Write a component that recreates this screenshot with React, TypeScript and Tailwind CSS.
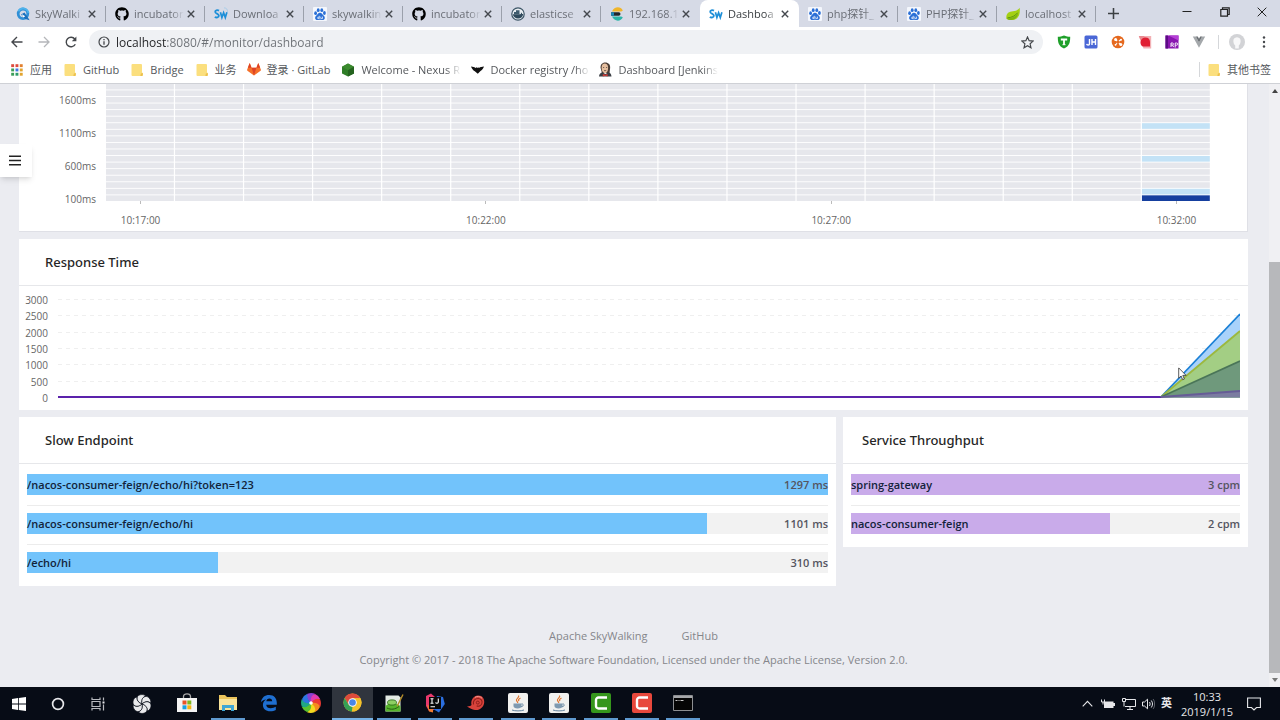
import type { ReactNode } from 'react';
import { FaGithub } from 'react-icons/fa';

/* ---------- favicons and small drawings ---------- */

const GithubMark = () => <FaGithub className="size-[14px] text-black" aria-hidden="true" />;

const QMark = () => (
  <svg viewBox="0 0 14 14" className="size-[14px]" aria-hidden="true">
    <circle cx="7" cy="6.8" r="4.8" fill="none" stroke="#2f8fd6" strokeWidth="2.8" />
    <path d="M2.400 4.200A5.400 5.400 0 0 1 12.400 6" fill="none" stroke="#4fb3ec" strokeWidth="1.800" />
    <path d="M5 7.500l3.500-2 5.200 7.800-4.500-1.300z" fill="#1b70bd" />
    <path d="M5.600 7l3.600 2.200-1.800 1.400z" fill="#fff" />
  </svg>
);

const SwMark = ({ arc = false }: { arc?: boolean }) => (
  <svg viewBox="0 0 14 14" className="size-[14px]" aria-hidden="true">
    <path
      d="M5 3.600C3.200 2.600 1 3.300 1.200 5c.2 1.700 3.800 1.700 3.700 3.800C4.800 10.600 2.400 11 .8 9.900"
      fill="none"
      stroke="#1d8fd8"
      strokeWidth="1.800"
    />
    <path d="M6.400 5.300l1.500 5.200 1.700-4.800 1.700 4.800 1.600-5.200" fill="none" stroke="#1d8fd8" strokeWidth="1.700" />
    {arc && <path d="M10 .8c2.500.2 3.800 1.800 3.500 4" fill="none" stroke="#a9cde8" strokeWidth="1" />}
  </svg>
);

const BaiduMark = () => (
  <svg viewBox="0 0 14 14" className="size-[14px]" aria-hidden="true">
    <rect width="14" height="14" rx="1" fill="#f4f7fd" />
    <g fill="#2a6fd6">
      <ellipse cx="2.600" cy="6.200" rx="1.400" ry="1.900" />
      <ellipse cx="5.200" cy="3.200" rx="1.400" ry="1.900" />
      <ellipse cx="8.800" cy="3.200" rx="1.400" ry="1.900" />
      <ellipse cx="11.400" cy="6" rx="1.400" ry="1.900" />
      <path d="M7 5.800c1.800 0 2.400 1.800 3.800 2.900 1.600 1.300 1.400 4.300-1.200 4.300-1 0-1.600-.3-2.600-.3s-1.600.3-2.600.3c-2.600 0-2.900-3-1.200-4.300C4.600 7.600 5.200 5.800 7 5.800z" />
    </g>
    <path d="M6.300 8.800v2.800H4.800v-1.400h1.300M7.800 9.600v2h1.700v-2" fill="none" stroke="#fff" strokeWidth=".7" />
  </svg>
);

const DockerHubMark = () => (
  <svg viewBox="0 0 14 14" className="size-[14px]" aria-hidden="true">
    <circle cx="7" cy="7" r="6.200" fill="#e9eef2" stroke="#3c5566" strokeWidth="1.200" />
    <path d="M1.800 7.200h7.400c.8 0 1-.7.7-1.700 1 .3 1.200 1 1.200 1.500h1.200c-.7 2.900-2.500 4.600-5.200 4.600S2.200 9.600 1.800 7.200z" fill="#2f4a5c" />
    <path d="M3 5h5.500v2.200H3zM5 3.200h3.500v1.800H5z" fill="#3f5c6e" />
  </svg>
);

const ElasticMark = () => (
  <svg viewBox="0 0 14 14" className="size-[14px]" aria-hidden="true">
    <path d="M2 4.400C3.400 1.700 5.300.3 7.800.3c2.200 0 3.900 1.200 5 3.200-.5.600-1.200.9-2 .9z" fill="#f0b52a" />
    <path d="M1.200 5.300h7.600a1.700 1.700 0 0 1 0 3.400H1.200a7 7 0 0 1 0-3.400z" fill="#20282d" />
    <path d="M1.200 5.300H4v3.400H1.200a7 7 0 0 1 0-3.400z" fill="#1a86b8" />
    <path d="M2 9.600h8.800c.8 0 1.500.3 2 .9-1.100 2-2.800 3.200-5 3.200-2.500 0-4.400-1.400-5.800-4.100z" fill="#2cb5a8" />
  </svg>
);

const SpringMark = () => (
  <svg viewBox="0 0 14 14" className="size-[14px]" aria-hidden="true">
    <path d="M13.600.8c.6 4.500.2 11.500-7 12.200-2.600.2-4.600-.3-6.200-1.200C-.2 6.500 2.600 4.500 7 4.200c3-.2 5.200-1.200 6.600-3.400z" fill="#a4d013" />
    <path d="M.6 11.500c4.500.2 9.400-1.500 11.600-6.300-.3 5-3.500 7.700-7 7.800-2 0-3.500-.5-4.600-1.500z" fill="#7fb512" />
    <path d="M1.500 10.800c4.200-.2 7.600-1.900 10-5" fill="none" stroke="#4f8a10" strokeWidth=".8" />
  </svg>
);

const Folder = () => (
  <svg viewBox="0 0 12 14" className="h-[14px] w-[12px]" aria-hidden="true">
    <path d="M1.500 1h8.500a1 1 0 0 1 1 1v7.500l.8.600V12a1 1 0 0 1-1 1h-9.300a1 1 0 0 1-1-1V2a1 1 0 0 1 1-1z" fill="#fbdf7e" />
    <path d="M9.300 13l.6-2.500 1.900-.6V12a1 1 0 0 1-1 1z" fill="#ecc04e" />
  </svg>
);

const appDots = ['#dd4b3e', '#dd4b3e', '#e2802f', '#3c9d58', '#3f76e4', '#e2a42f', '#3c9d58', '#2e9a6a', '#e2a42f'];

const AppsGrid = () => (
  <svg viewBox="0 0 12 12" className="size-[12px]" aria-hidden="true">
    {appDots.map((c, i) => (
      <rect key={i} x={(i % 3) * 4.3 + 0.2} y={Math.floor(i / 3) * 4.3 + 0.2} width="2.900" height="2.900" fill={c} />
    ))}
  </svg>
);

const GitlabMark = () => (
  <svg viewBox="0 0 14 13" className="h-[13px] w-[14px]" aria-hidden="true">
    <path d="M7 12.500L.4 7.700c-.3-.2-.4-.5-.3-.9L2.400.5c.1-.4.5-.4.6 0l1.600 4.300h4.800L11 .5c.1-.4.5-.4.6 0l2.300 6.300c.1.400 0 .7-.3.9z" fill="#f5702a" />
    <path d="M7 12.500L4.600 4.800h4.800z" fill="#dd4326" />
    <path d="M2.700.2L4.600 4.800H.9zM11.300.2l1.800 4.600H9.400z" fill="#dd4326" />
  </svg>
);

const NexusMark = () => (
  <svg viewBox="0 0 12 14" className="h-[14px] w-[12px]" aria-hidden="true">
    <path d="M6 .5l6 3.300v6.600l-6 3.200-6-3.200V3.800z" fill="#2f7d27" />
    <path d="M6 .5l6 3.300-6 3.400-6-3.400z" fill="#3b8a2e" />
    <path d="M6 7.200l6-3.400v6.600l-6 3.200z" fill="#25631f" />
  </svg>
);

const BatMark = () => (
  <svg viewBox="0 0 13 10" className="h-[10px] w-[13px]" aria-hidden="true">
    <path d="M0 1.500c2 .2 3.300.5 4.500 1.500l1-.8.8.7.800-.7.900.8c1.200-1 3-1.300 5-1.500-.8 2-2 3.800-3.500 4.500L6.800 8.700 3.800 6.300C2 5.300.8 3.700 0 1.500z" fill="#111" />
  </svg>
);

const JenkinsMark = () => (
  <svg viewBox="0 0 14 15" className="h-[15px] w-[14px]" aria-hidden="true">
    <path d="M2.600 6C2.200 2.600 4.200.4 7.200.4c3.400 0 5.200 2.200 4.900 5.600L11.500 11H4z" fill="#4a3c34" />
    <path d="M3.600 5.600C3.600 3 5 1.500 6.700 1.500c1.900 0 3.400 1.400 3.400 4s-.7 5.600-3.100 5.600-3.400-2.700-3.400-5.500z" fill="#e6bf9f" />
    <path d="M1 14.500c.2-2.500 1.500-3.500 3.300-4.200l3 1.700 3.400-1.700c1.800.7 2.600 2 2.800 4.200z" fill="#3b3f45" />
    <path d="M4.800 12l2.400.8 2.400-.8v2.500l-2.400-.8-2.400.8z" fill="#cf3a35" />
    <path d="M5 5.500h1.200M8 5.500h1.200M6 8.600h2.200" stroke="#5a4a40" strokeWidth=".8" />
  </svg>
);

const Cross = ({ className }: { className: string }) => (
  <svg viewBox="0 0 8 8" className={className} aria-hidden="true">
    <path d="M.8.8l6.400 6.400M7.200.8L.8 7.200" stroke="currentColor" strokeWidth="1.400" fill="none" />
  </svg>
);

/* ---------- browser chrome ---------- */

type Tab = { title: string; icon: ReactNode; active?: boolean };

const tabs: Tab[] = [
  { title: 'SkyWalki', icon: <QMark /> },
  { title: 'incubator', icon: <GithubMark /> },
  { title: 'Downloa', icon: <SwMark arc /> },
  { title: 'skywalkin', icon: <BaiduMark /> },
  { title: 'incubator', icon: <GithubMark /> },
  { title: 'elasticse', icon: <DockerHubMark /> },
  { title: '192.168.1', icon: <ElasticMark /> },
  { title: 'Dashboa', icon: <SwMark />, active: true },
  { title: 'php探针_', icon: <BaiduMark /> },
  { title: 'PHP探针_', icon: <BaiduMark /> },
  { title: 'localhost', icon: <SpringMark /> },
];

const TabStrip = () => (
  <header className="flex h-[27px] shrink-0 items-stretch bg-[#d6dae6] pl-[7px]">
    {tabs.map((t, i) => (
      <div
        key={i}
        className={
          t.active
            ? 'flex w-[99px] shrink-0 items-center rounded-t-lg bg-white pl-[9px] text-[#3c4043]'
            : 'flex w-[99px] shrink-0 items-center pl-[9px] text-[#6a6e76]'
        }
      >
        {t.icon}
        <button
          type="button"
          className="ml-[5px] w-[50px] text-left text-[11px] leading-4 whitespace-nowrap [mask-image:linear-gradient(to_right,black_75%,transparent)]"
        >
          {t.title}
        </button>
        <button type="button" aria-label={`Close ${t.title}`} className="ml-[3px] text-[#44484e]">
          <Cross className="size-[8px]" />
        </button>
        {i !== 6 && i !== 7 && <span className="ml-auto h-[16px] w-px bg-[#9ba0ab]" />}
      </div>
    ))}
    <button type="button" aria-label="New tab" className="ml-[12px] text-[#3c4043]">
      <svg viewBox="0 0 10 10" className="size-[11px]" aria-hidden="true">
        <path d="M5 0v10M0 5h10" stroke="currentColor" strokeWidth="1.400" />
      </svg>
    </button>
    <div className="ml-auto flex items-center pb-[3px] text-[#222]">
      <button type="button" aria-label="Minimize" className="flex w-[38px] justify-center">
        <svg viewBox="0 0 10 10" className="size-[10px]" aria-hidden="true">
          <path d="M.5 4.500h9" stroke="currentColor" />
        </svg>
      </button>
      <button type="button" aria-label="Restore" className="flex w-[38px] justify-center">
        <svg viewBox="0 0 10 10" className="size-[10px]" aria-hidden="true">
          <path d="M.8 2.500h6.700v6.700H.8zM2.500 2.500V.8h6.700v6.700H7.500" stroke="currentColor" strokeWidth="1.200" fill="none" />
        </svg>
      </button>
      <button type="button" aria-label="Close window" className="flex w-[36px] justify-center">
        <svg viewBox="0 0 10 10" className="size-[10px]" aria-hidden="true">
          <path d="M.7.7l8.600 8.600M9.300.7L.7 9.300" stroke="currentColor" />
        </svg>
      </button>
    </div>
  </header>
);

const extensions: { name: string; icon: ReactNode }[] = [
  {
    name: 'Tampermonkey',
    icon: (
      <svg viewBox="0 0 14 14" className="size-[14px]" aria-hidden="true">
        <path d="M7 .5c2 1 4 1.200 6.200 1.200 0 5.300-.6 9.300-6.200 11.800C1.400 11 .8 7 .8 1.700 3 1.700 5 1.500 7 .5z" fill="#1fa02a" />
        <path d="M3.800 4.500h6.400M7 4.500v5.200" stroke="#fff" strokeWidth="1.800" />
        <path d="M5.500 9.700h3" stroke="#fff" />
      </svg>
    ),
  },
  {
    name: 'JSON Handle',
    icon: (
      <svg viewBox="0 0 14 14" className="size-[14px]" aria-hidden="true">
        <rect x=".5" y=".5" width="13" height="13" rx="1.500" fill="#4a67d6" />
        <path d="M5.500 4v4.800c0 1.600-2.600 1.600-2.800 0M8 4v6M11.500 4v6M8 7h3.500" stroke="#fff" strokeWidth="1.400" fill="none" />
      </svg>
    ),
  },
  {
    name: 'Proxy',
    icon: (
      <svg viewBox="0 0 14 14" className="size-[14px]" aria-hidden="true">
        <circle cx="7" cy="7" r="6.300" fill="#e5691f" />
        <path d="M4.500 4.500l5 5M10 4.500l-3 2.500-2.500 3" stroke="#fff" strokeWidth="1.100" />
        <circle cx="4.600" cy="4.600" r="1.500" fill="#fff" />
        <circle cx="10" cy="4.700" r="1" fill="#fff" />
        <circle cx="9.800" cy="9.400" r="1.500" fill="#fff" />
        <circle cx="4.500" cy="9.800" r=".9" fill="#fff" />
        <circle cx="7" cy="7" r="1.600" fill="#e5691f" />
      </svg>
    ),
  },
  {
    name: 'Recorder',
    icon: (
      <svg viewBox="0 0 14 14" className="size-[14px]" aria-hidden="true">
        <path d="M.8 1h12.400v12.400H5.500z" fill="#f2b0b4" />
        <path d="M.8 1h6L2.500 5z" fill="#e88a90" />
        <path d="M2.500 7.500c0-3 2-5 5-5 3 0 4.500 2 4.500 4.500v4.500H5.500c-2 0-3-1.800-3-4z" fill="#e01f33" />
      </svg>
    ),
  },
  {
    name: 'Axure RP',
    icon: (
      <svg viewBox="0 0 14 14" className="size-[14px]" aria-hidden="true">
        <rect x=".5" y=".5" width="13" height="13" fill="#8a16b0" />
        <rect x=".5" y=".5" width="2.500" height="13" fill="#5d0c86" />
        <path d="M3.500.5h10v5z" fill="#b53fd6" />
        <path d="M6 12V8h1.500c1.300 0 1.300 2 0 2H6M7.500 10L8.600 12M10.200 12.500V8h1.400c1.500 0 1.500 2.200 0 2.200h-1.400" stroke="#fff" strokeWidth=".9" fill="none" />
      </svg>
    ),
  },
  {
    name: 'Vue devtools',
    icon: (
      <svg viewBox="0 0 14 14" className="size-[14px]" aria-hidden="true">
        <path d="M.8 1.500h3L7 7.400l3.200-5.900h3L7 12.700z" fill="#a4a8ab" />
        <path d="M3.800 1.500h2L7 3.800l1.200-2.300h2L7 7.400z" fill="#6c7175" />
      </svg>
    ),
  },
];

const Toolbar = () => (
  <div className="flex h-[30px] shrink-0 items-center bg-white pr-[10px] pl-[11px] text-[#44474b]">
    <button type="button" aria-label="Back">
      <svg viewBox="0 0 12 12" className="size-[12px]" aria-hidden="true">
        <path d="M11.500 6H1.200M6 1L1 6l5 5" fill="none" stroke="currentColor" strokeWidth="1.400" />
      </svg>
    </button>
    <button type="button" aria-label="Forward" className="ml-[15px] text-[#b5b7ba]">
      <svg viewBox="0 0 12 12" className="size-[12px]" aria-hidden="true">
        <path d="M.5 6h10.300M6 1l5 5-5 5" fill="none" stroke="currentColor" strokeWidth="1.300" />
      </svg>
    </button>
    <button type="button" aria-label="Reload" className="ml-[15px]">
      <svg viewBox="0 0 12 12" className="size-[12px]" aria-hidden="true">
        <path d="M10.300 8.200A4.800 4.800 0 1 1 9.800 3" fill="none" stroke="currentColor" strokeWidth="1.400" />
        <path d="M11.400.6v4.600H6.800z" fill="currentColor" />
      </svg>
    </button>
    <div className="ml-[12px] flex h-6 grow items-center rounded-full bg-[#eff1f4] px-[9px]">
      <svg viewBox="0 0 12 12" className="size-[12px] shrink-0" aria-hidden="true">
        <circle cx="6" cy="6" r="5" fill="none" stroke="currentColor" strokeWidth="1.200" />
        <path d="M6 5.300v3.400M6 3v1.300" stroke="currentColor" strokeWidth="1.300" />
      </svg>
      <input
        type="text"
        aria-label="Address"
        defaultValue="localhost:8080/#/monitor/dashboard"
        className="ml-[6px] h-5 min-w-0 grow bg-[linear-gradient(to_right,#202124_51px,#6d7176_51px)] bg-clip-text text-[12px] text-transparent outline-none"
      />
      <button type="button" aria-label="Bookmark this page">
        <svg viewBox="0 0 12 12" className="size-[13px]" aria-hidden="true">
          <path d="M6 .9l1.500 3.400 3.700.4-2.800 2.500.8 3.700L6 9l-3.200 1.900.8-3.700L.8 4.700l3.700-.4z" fill="none" stroke="currentColor" strokeWidth="1.100" />
        </svg>
      </button>
    </div>
    <div className="ml-[14px] flex items-center gap-[13px]">
      {extensions.map((e) => (
        <button key={e.name} type="button" aria-label={e.name}>
          {e.icon}
        </button>
      ))}
    </div>
    <span className="ml-[12px] h-[14px] w-px bg-[#d5d7da]" />
    <button type="button" aria-label="Profile" className="ml-[10px]">
      <svg viewBox="0 0 16 16" className="size-[16px]" aria-hidden="true">
        <circle cx="8" cy="8" r="8" fill="#d2d3d6" />
        <path d="M8 3.200a4 4 0 0 0-3.600 4.400c.1 1.900.9 3.200 1.800 3.800v3.200h3.600v-3.200c.9-.6 1.700-1.900 1.800-3.800A4 4 0 0 0 8 3.200z" fill="#f8f8f9" />
      </svg>
    </button>
    <button type="button" aria-label="Menu" className="ml-[13px]">
      <svg viewBox="0 0 12 12" className="size-[12px]" aria-hidden="true">
        <g fill="currentColor">
          <circle cx="6" cy="1.500" r="1.200" />
          <circle cx="6" cy="6" r="1.200" />
          <circle cx="6" cy="10.500" r="1.200" />
        </g>
      </svg>
    </button>
  </div>
);

const fade = 'w-[100px] [mask-image:linear-gradient(to_right,black_85%,transparent)]';

const BookmarksBar = () => (
  <nav
    aria-label="Bookmarks"
    className="flex h-[27px] shrink-0 items-center border-b border-[#cfd1d6] bg-white pr-[9px] pb-px pl-[11px] text-[11px] leading-4 whitespace-nowrap text-[#55585c]"
  >
    <a href="#apps" className="flex items-center gap-[7px]"><AppsGrid />应用</a>
    <a href="#github" className="ml-[12px] flex items-center gap-[7px]"><Folder />GitHub</a>
    <a href="#bridge" className="ml-[12px] flex items-center gap-[7px]"><Folder />Bridge</a>
    <a href="#work" className="ml-[12px] flex items-center gap-[7px]"><Folder />业务</a>
    <a href="#gitlab" className="ml-[10px] flex items-center gap-[6px]">
      <GitlabMark />
      登录 · GitLab
    </a>
    <a href="#nexus" className="ml-[12px] flex items-center gap-[7px]">
      <NexusMark />
      <span className={fade}>Welcome - Nexus R</span>
    </a>
    <a href="#registry" className="ml-[10px] flex items-center gap-[6px]">
      <BatMark />
      <span className={fade}>Docker registry /ho</span>
    </a>
    <a href="#jenkins" className="ml-[8px] flex items-center gap-[6px]">
      <JenkinsMark />
      <span className={fade}>Dashboard [Jenkins</span>
    </a>
    <span className="ml-auto h-[15px] w-px bg-[#d5d7da]" />
    <a href="#other" className="ml-[8px] flex items-center gap-[7px]"><Folder />其他书签</a>
  </nav>
);

/* ---------- dashboard ---------- */

const COLS = 16;
const ROWS = 18;
const ROW_PITCH = 6.56;
const MAP_HEIGHT = 117;
const highlights: Record<number, string> = { 0: '#153f9f', 1: '#c3e2f6', 6: '#c3e2f6', 11: '#c3e2f6' };
const timeLabels: Record<number, string> = { 0: '10:17:00', 5: '10:22:00', 10: '10:27:00', 15: '10:32:00' };

const Heatmap = () => (
  <section className="flex h-[148px] shrink-0 border-r border-b border-[#dfe0e6] bg-white pr-[36px] text-[10px] text-[#666]">
    <div className="w-[87px] shrink-0 pr-[10px] text-right">
      {['1600ms', '1100ms', '600ms', '100ms'].map((l) => (
        <div key={l} className="h-[33px] leading-8">
          {l}
        </div>
      ))}
    </div>
    <div className="min-w-0 grow">
      <svg viewBox={`0 0 1104 ${MAP_HEIGHT}`} preserveAspectRatio="none" className="block h-[117px] w-full" aria-hidden="true">
        {Array.from({ length: COLS * ROWS }, (_, n) => {
          const col = n % COLS;
          const row = Math.floor(n / COLS);
          const fill = (col === COLS - 1 && highlights[row]) || '#e6e7ec';
          return (
            <rect
              key={n}
              x={col * 69}
              y={MAP_HEIGHT - (row + 1) * ROW_PITCH + 0.9}
              width={67.8}
              height={ROW_PITCH - 0.9}
              fill={fill}
            />
          );
        })}
      </svg>
      <div className="grid grid-cols-16 text-center">
        {Array.from({ length: COLS }, (_, i) => (
          <div key={i}>
            {timeLabels[i] && (
              <>
                <span className="mx-auto block h-[3px] w-px bg-[#bbb]" />
                <span className="mt-[8px] block leading-4">{timeLabels[i]}</span>
              </>
            )}
          </div>
        ))}
      </div>
    </div>
  </section>
);

const CardTitle = ({ children, tight = false }: { children: ReactNode; tight?: boolean }) => (
  <h2
    className={
      tight
        ? "h-[47px] border-b border-[#e6e7ea] pl-[19px] font-['Noto_Sans',sans-serif] text-[13px] leading-[47px] font-medium text-[#262626]"
        : "h-[47px] border-b border-[#e6e7ea] pl-[26px] font-['Noto_Sans',sans-serif] text-[13px] leading-[47px] font-medium text-[#262626]"
    }
  >
    {children}
  </h2>
);

const series = [
  { top: 15, fill: '#a9d2fb', line: '#1b80d6' },
  { top: 32, fill: '#a3ce84', line: '#9cb83e' },
  { top: 62, fill: '#6f997c', line: '#4a7558' },
  { top: 92, fill: '#7b7ca0', line: '#665c96' },
];

const ResponseTime = () => (
  <section className="bg-white">
    <CardTitle>Response Time</CardTitle>
    <div className="flex pr-[8px] pb-[4px]">
      <div className="flex h-[120px] w-[39px] flex-col justify-between pt-[6px] pr-[10px] text-right text-[10px] leading-4 text-[#666]">
        {[3000, 2500, 2000, 1500, 1000, 500, 0].map((v) => (
          <span key={v}>{v}</span>
        ))}
      </div>
      <svg viewBox="0 0 1182 100" preserveAspectRatio="none" className="mt-[13px] block h-[100px] min-w-0 grow" aria-hidden="true">
        {[0, 1, 2, 3, 4, 5].map((i) => (
          <path key={i} d={`M0 ${Math.round(i * 16.3) + 0.5}H1182`} stroke="#efefef" strokeDasharray="4 4" />
        ))}
        <path d="M0 98H1103" stroke="#5b22ab" strokeWidth="2" />
        {series.map((s) => (
          <path key={s.top} d={`M1103 98.500L1182 ${s.top}V98.500z`} fill={s.fill} />
        ))}
        {series.map((s) => (
          <path key={s.top} d={`M1103 98L1182 ${s.top}`} stroke={s.line} strokeWidth="1.800" />
        ))}
      </svg>
    </div>
  </section>
);

type Row = { name: string; value: number };

type RankListProps = { title: string; rows: Row[]; unit: string; barClass: string; tight?: boolean };

const RankList = ({ title, rows, unit, barClass, tight }: RankListProps) => {
  const max = Math.max(...rows.map((r) => r.value));
  return (
    <section className="bg-white pb-[3px]">
      <CardTitle tight={tight}>{title}</CardTitle>
      <ul className="px-[8px] pt-[3px]">
        {rows.map((r) => (
          <li key={r.name} className="border-b border-[#ececec] pt-[7px] pb-[10px] last:border-b-0">
            <div className="grid h-[21px] items-center bg-[#f2f2f2] text-[11px] leading-[20px] font-semibold">
              <div className={barClass} style={{ width: `${(r.value / max) * 100}%` }} />
              <div className="col-start-1 row-start-1 flex justify-between">
                <span className="text-[#13233a]">{r.name}</span>
                <span className="text-[#55555f]">
                  {r.value} {unit}
                </span>
              </div>
            </div>
          </li>
        ))}
      </ul>
    </section>
  );
};

const Dashboard = () => (
  <main className="relative flex min-h-0 grow overflow-hidden bg-[#ebecf1]">
    <div className="min-w-0 grow pr-[21px] pl-[19px]">
      <div className="flex flex-col gap-[7px]">
        <Heatmap />
        <ResponseTime />
        <div className="grid grid-cols-3 items-start gap-[7px]">
          <div className="col-span-2">
            <RankList
              title="Slow Endpoint"
              unit="ms"
              barClass="col-start-1 row-start-1 h-full bg-[#72c3fb]"
              rows={[
                { name: '/nacos-consumer-feign/echo/hi?token=123', value: 1297 },
                { name: '/nacos-consumer-feign/echo/hi', value: 1101 },
                { name: '/echo/hi', value: 310 },
              ]}
            />
          </div>
          <RankList
            tight
            title="Service Throughput"
            unit="cpm"
            barClass="col-start-1 row-start-1 h-full bg-[#c9abea]"
            rows={[
              { name: 'spring-gateway', value: 3 },
              { name: 'nacos-consumer-feign', value: 2 },
            ]}
          />
        </div>
      </div>
      <footer className="mt-[38px] text-center text-[11px] leading-6 text-[#85868b]">
        <div className="flex justify-center gap-[34px]">
          <a href="#skywalking">Apache SkyWalking</a>
          <a href="#github">GitHub</a>
        </div>
        <p>Copyright © 2017 - 2018 The Apache Software Foundation, Licensed under the Apache License, Version 2.0.</p>
      </footer>
    </div>
    <div className="flex w-[11px] shrink-0 flex-col items-center bg-[#f0f0f3] py-[5px]" aria-hidden="true">
      <svg viewBox="0 0 6 4" className="h-[4px] w-[6px]"><path d="M0 4l3-4 3 4z" fill="#444" /></svg>
      <div className="mt-[169px] w-full grow bg-[#b7b8bb]" />
      <svg viewBox="0 0 6 4" className="mt-[5px] h-[4px] w-[6px]"><path d="M0 0h6L3 4z" fill="#777" /></svg>
    </div>
    <button
      type="button"
      aria-label="Toggle menu"
      className="absolute top-[60px] left-0 flex h-[33px] w-[32px] items-center bg-white pl-[9px] shadow-md"
    >
      <svg viewBox="0 0 12 11" className="h-[11px] w-[12px]" aria-hidden="true">
        <path d="M0 1.200h12M0 5.500h12M0 9.800h12" stroke="#222" strokeWidth="1.600" />
      </svg>
    </button>
    <svg viewBox="0 0 9 14" className="absolute top-[283px] left-[1178px] h-[14px] w-[9px]" aria-hidden="true">
      <path d="M.7.9v10.300l2.400-2.200 1.600 3.700 1.700-.7-1.600-3.600h3.300z" fill="#fff" stroke="#333" strokeWidth=".8" />
    </svg>
  </main>
);

/* ---------- taskbar ---------- */

const CamtasiaIcon = ({ color }: { color: string }) => (
  <svg viewBox="0 0 20 20" className="size-[20px]" aria-hidden="true">
    <rect width="20" height="20" rx="2" fill={color} />
    <path d="M16 4.500H7.500a2.500 2.500 0 0 0-2.500 2.500v6A2.500 2.500 0 0 0 7.500 15.500H16" fill="none" stroke="#fff" strokeWidth="2.400" />
  </svg>
);

const JavaIcon = () => (
  <svg viewBox="0 0 20 20" className="size-[20px]" aria-hidden="true">
    <rect width="20" height="20" rx="2" fill="#f1f1ef" />
    <path d="M10.500 2.500c1.500 2-3 3-2 5 .4.900 1.500 1.500 1.200 2.600M12.500 5c-2 1-2.500 2-1.500 3.200" fill="none" stroke="#e0762f" strokeWidth="1.200" />
    <path d="M5.500 10.500h8v2.500c0 1.500-1.500 2.500-4 2.500s-4-1-4-2.500z" fill="#7f9ab0" />
    <path d="M13.500 11c2.500-.5 2.200 2.700-.6 2.800M4 17c3 1.200 9 1.200 12 0" fill="none" stroke="#6585a0" />
  </svg>
);

const wheel = ['#8a3fd0', '#e03ab0', '#ec3a34', '#f58a1f', '#f4d91f', '#5cc22e', '#20a884', '#2c76e0'];

const taskApps: { name: string; running: boolean; active?: boolean; icon: ReactNode }[] = [
  {
    name: 'Store',
    running: false,
    icon: (
      <svg viewBox="0 0 20 20" className="size-[20px]" aria-hidden="true">
        <path d="M6.500 6V3.500a3.500 2.700 0 0 1 7 0V6" fill="none" stroke="#aaa" strokeWidth="1.300" />
        <path d="M0 5h20v14H0z" fill="#f4f4f4" />
        <path d="M5.500 7.500h4v4h-4z" fill="#ea5326" />
        <path d="M10.300 7.500h4v4h-4z" fill="#7fb71e" />
        <path d="M5.500 12.300h4v4h-4z" fill="#19a0e0" />
        <path d="M10.300 12.300h4v4h-4z" fill="#f7b512" />
      </svg>
    ),
  },
  {
    name: 'Explorer',
    running: true,
    icon: (
      <svg viewBox="0 0 20 18" className="h-[18px] w-[20px]" aria-hidden="true">
        <path d="M1 1h6l2 2h10v13H1z" fill="#eac45c" />
        <path d="M1 5h18v11H1z" fill="#f9e39a" />
        <path d="M4 17v-6h12v6h-3v-3H7v3z" fill="#3fa6d4" />
      </svg>
    ),
  },
  {
    name: 'Edge',
    running: false,
    icon: (
      <svg viewBox="0 0 18 18" className="size-[18px]" aria-hidden="true">
        <path d="M1 8.200C1.600 3.600 4.800 1 9.200 1c5 0 7.600 3.500 7.600 7.800v1.900H6.200c.1 2.400 2 3.500 4.600 3.500 1.900 0 3.600-.5 5-1.400v3.100c-1.400.8-3.300 1.300-5.500 1.300-4.600 0-7.400-2.500-7.400-6.300 0-2.300 1.200-4.200 3.200-5.300C4.200 5.800 2.300 6.600 1 8.200zm5.300-.9h5.900c0-1.900-1-2.900-2.800-2.900-1.700 0-2.900 1.100-3.100 2.900z" fill="#1f6fd0" />
      </svg>
    ),
  },
  {
    name: 'Browser',
    running: false,
    icon: (
      <svg viewBox="-10 -10 20 20" className="size-[20px]" aria-hidden="true">
        {wheel.map((c, i) => (
          <path key={c} d="M0 0C-3.500-2.500-5.500-6-3.500-9.200A10 10 0 0 1 4-9.200C1-7 0-4 0 0z" fill={c} transform={`rotate(${i * 45})`} />
        ))}
        <circle r="1.800" fill="#fff" />
      </svg>
    ),
  },
  {
    name: 'Chrome',
    running: true,
    active: true,
    icon: (
      <svg viewBox="0 0 20 20" className="size-[19px]" aria-hidden="true">
        <circle cx="10" cy="10" r="9.500" fill="#f4c22b" />
        <path d="M1.800 5.200A9.500 9.500 0 0 1 18.300 5.500H10L5.900 12.300z" fill="#de4b3c" />
        <path d="M1.800 5.200L5.900 12.300 10 14.500l-.7 5A9.500 9.500 0 0 1 1.800 5.200z" fill="#35a155" />
        <path d="M14 12.300L9.300 19.500A9.500 9.500 0 0 0 18.300 5.500H10z" fill="#f4c22b" />
        <circle cx="10" cy="10" r="4.500" fill="#fff" />
        <circle cx="10" cy="10" r="3.500" fill="#4a86e8" />
      </svg>
    ),
  },
  {
    name: 'Notepad++',
    running: true,
    icon: (
      <svg viewBox="0 0 20 20" className="size-[20px]" aria-hidden="true">
        <path d="M1.500 2.500h13l2 2v14h-15z" fill="#e4ebe6" />
        <path d="M1.500 13c4-4 9-4 15 0v5.500h-15z" fill="#58b52e" />
        <ellipse cx="8" cy="9.500" rx="4.500" ry="2.600" fill="#8ed063" stroke="#2e6d18" strokeWidth=".9" />
        <path d="M3 15c4 2 8 1.500 12-1.500" stroke="#285d14" fill="none" />
        <path d="M19 1.500l-5 10-.8 1.800" stroke="#b38c28" strokeWidth="1.400" fill="none" />
      </svg>
    ),
  },
  {
    name: 'IntelliJ IDEA',
    running: true,
    icon: (
      <svg viewBox="0 0 20 20" className="size-[20px]" aria-hidden="true">
        <path d="M1 3l5-2.500L10 4 9 17l-5 1-3-5z" fill="#e9386c" />
        <path d="M2 12l6 2v5.500l-4-1z" fill="#f07a30" />
        <path d="M12 3l6 1 1.800 7-5.800 8.500L8 16z" fill="#2b6fe0" />
        <path d="M4 4h12v12H4z" fill="#090909" />
        <path d="M5.500 5.800h3M7 5.800v4.500M5.500 10.300h3M13.300 5.500v3.500c0 1.500-2.200 1.700-2.800.5M5.500 13.800h4.500" stroke="#fff" strokeWidth="1.100" fill="none" />
      </svg>
    ),
  },
  {
    name: 'Shell client',
    running: true,
    icon: (
      <svg viewBox="0 0 20 18" className="h-[18px] w-[20px]" aria-hidden="true">
        <path d="M1 12.500c2.500-.2 3.500-.5 4.500-1.500C4.500 6.500 7 2 12 1.500c4.500-.2 6.500 3.500 6.200 7C17.800 13 14 16.500 9 16c-3-.3-5-1.800-8-3.500z" fill="#d8433c" />
        <path d="M7.500 10.500c-.8-3.500 1.500-6 4.500-6s4.500 2 4 4.500c-.4 2.500-3.300 4-5.300 2.800" fill="none" stroke="#8f1f1b" strokeWidth="1.100" />
        <circle cx="11.800" cy="8.600" r="1.500" fill="none" stroke="#8f1f1b" />
        <path d="M9 3.400c2-1.400 5-1.200 7 .8" stroke="#f29a90" fill="none" />
      </svg>
    ),
  },
  { name: 'Java 1', running: true, icon: <JavaIcon /> },
  { name: 'Java 2', running: true, icon: <JavaIcon /> },
  { name: 'Camtasia', running: true, icon: <CamtasiaIcon color="#35961c" /> },
  { name: 'Camtasia Recorder', running: true, icon: <CamtasiaIcon color="#e8483c" /> },
  {
    name: 'Command Prompt',
    running: true,
    icon: (
      <svg viewBox="0 0 20 16" className="h-[16px] w-[20px]" aria-hidden="true">
        <path d="M.5.500h19v15H.5z" fill="#050505" stroke="#8d8f92" />
        <path d="M1 1h18v2H1z" fill="#a5a7aa" />
        <path d="M2.500 5.500h2M5.500 5.500h1M7.500 5.500h3" stroke="#ccc" />
      </svg>
    ),
  },
];

const Taskbar = () => (
  <div className="flex h-[33px] shrink-0 items-stretch bg-[#070c16] text-[#e6e7ea]">
    <button type="button" aria-label="Start" className="flex w-[37px] items-center justify-center">
      <svg viewBox="0 0 14 14" className="size-[14px]" aria-hidden="true">
        <path d="M0 2l6-.9v5.500H0zM6.800 1L14 0v6.600H6.800zM0 7.400h6v5.500L0 12zM6.800 7.400H14V14l-7.200-1z" fill="#fff" />
      </svg>
    </button>
    <button type="button" aria-label="Cortana" className="flex w-[41px] items-center justify-center">
      <svg viewBox="0 0 14 14" className="size-[14px]" aria-hidden="true">
        <circle cx="7" cy="7" r="5.400" fill="none" stroke="currentColor" strokeWidth="1.700" />
      </svg>
    </button>
    <button type="button" aria-label="Task view" className="flex w-[40px] items-center justify-center">
      <svg viewBox="0 0 14 14" className="size-[14px]" aria-hidden="true">
        <path d="M1 .5v2h8v-2M1 13.500v-2h8v2M1 4.500h8v5H1zM12.500.5v3M12.500 7.500v6" fill="none" stroke="#b9bbc0" strokeWidth="1.200" />
        <path d="M11.500 4.500h2v2h-2z" fill="currentColor" />
      </svg>
    </button>
    <button type="button" aria-label="Pinned app" className="flex w-[48px] items-center justify-center pr-px">
      <svg viewBox="-10 -10 20 20" className="size-[20px]" aria-hidden="true">
        {[0, 60, 120, 180, 240, 300].map((a) => (
          <path key={a} d="M0 0C-4.500-1.500-6-4.500-4.500-7.500-2.500-10 2-10 3.500-8 .5-6.500-.5-4 0 0z" fill="#e9eaec" stroke="#070c16" strokeWidth=".7" transform={`rotate(${a})`} />
        ))}
      </svg>
    </button>
    <div className="grid w-[538px] grid-cols-13">
      {taskApps.map((a) => (
        <button
          key={a.name}
          type="button"
          aria-label={a.name}
          className={a.active ? 'flex flex-col items-center bg-[#30353e]' : 'flex flex-col items-center'}
        >
          <span className="flex grow items-center">{a.icon}</span>
          <span
            className={
              a.active ? 'h-[2px] w-full bg-[#76b3e8]' : a.running ? 'h-[2px] w-[34px] bg-[#5f9ad0]' : 'h-[2px] w-[34px]'
            }
          />
        </button>
      ))}
    </div>
    <div className="ml-auto flex items-center text-[11px]">
      <button type="button" aria-label="Show hidden icons">
        <svg viewBox="0 0 11 7" className="h-[7px] w-[11px]" aria-hidden="true">
          <path d="M.7 6.300l4.800-5 4.800 5" fill="none" stroke="currentColor" strokeWidth="1.100" />
        </svg>
      </button>
      <svg viewBox="0 0 14 10" className="ml-[8px] h-[10px] w-[14px]" aria-hidden="true">
        <path d="M3 2.500h9.500v1.500H14v3h-1.500V9H3z" fill="#e6e7ea" />
        <path d="M.5.500v2.500h3V.500M2 3v2.500" stroke="#e6e7ea" fill="none" />
      </svg>
      <svg viewBox="0 0 14 12" className="ml-[7px] h-[12px] w-[14px]" aria-hidden="true">
        <path d="M4 1.500h9.500v7H3M5 11.500h6M8 8.500v3M.5.500h3v3h-3zM2 3.500v5" stroke="#e6e7ea" fill="none" />
      </svg>
      <svg viewBox="0 0 13 12" className="ml-[6px] h-[12px] w-[13px]" aria-hidden="true">
        <path d="M.5 4h2l3-2.800v9.600L2.500 8h-2zM7.500 4c.8 1.200.8 2.800 0 4M9.300 2.500c1.600 2 1.600 5 0 7" stroke="#e6e7ea" fill="none" />
        <path d="M11.200 1.200c2 3 2 6.600 0 9.600" stroke="#6c7078" fill="none" />
      </svg>
      <span className="ml-[6px] font-semibold">英</span>
      <div className="ml-[9px] w-[52px] text-center leading-[15px] whitespace-nowrap">
        10:33
        <br />
        2019/1/15
      </div>
      <button type="button" aria-label="Notifications" className="mr-[19px] ml-[14px]">
        <svg viewBox="0 0 14 14" className="size-[14px]" aria-hidden="true">
          <path d="M.6 1h12.800v9.500H9.500L7 13l-2.500-2.500H.6z" fill="none" stroke="currentColor" strokeWidth="1.100" />
        </svg>
      </button>
    </div>
  </div>
);

export default function App() {
  return (
    <div className="flex h-screen flex-col overflow-hidden font-['Open_Sans','Noto_Sans_CJK_SC',sans-serif]">
      <TabStrip />
      <Toolbar />
      <BookmarksBar />
      <Dashboard />
      <Taskbar />
    </div>
  );
}
